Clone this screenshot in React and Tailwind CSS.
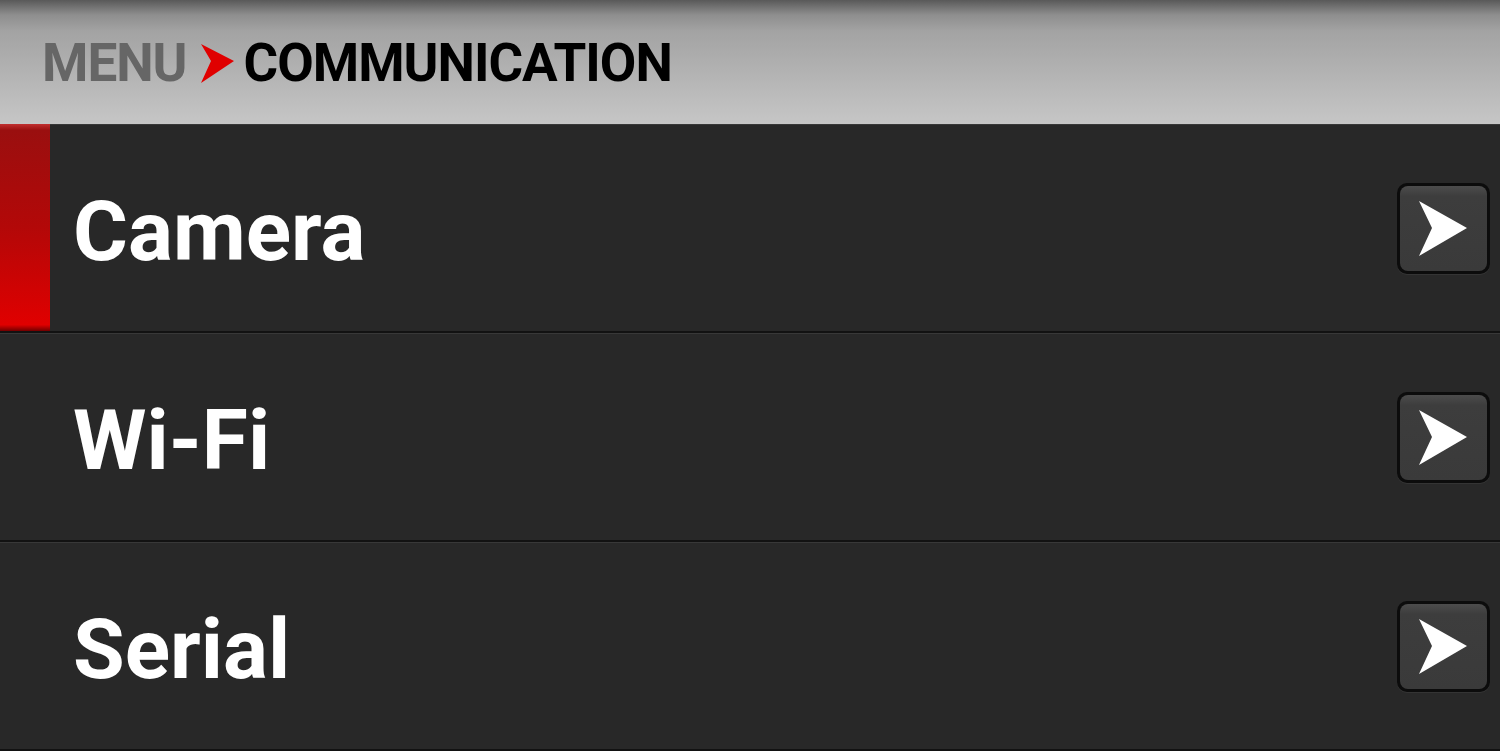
import React from "react";

function Chevron() {
  return (
    <svg width="93" height="91" viewBox="0 0 93 91" className="block">
      <path d="M22 18 L70 45 L22 73 L35 45 Z" fill="#ffffff" />
    </svg>
  );
}

function ArrowButton() {
  return (
    <div className="w-[93px] h-[91px] rounded-[10px] bg-[#0c0c0c] p-[3px] shadow-[0_1px_0_rgba(255,255,255,0.06)]">
      <div className="relative w-full h-full rounded-[8px] bg-[linear-gradient(#4c4c4c,#3d3d3d_12%,#3a3a3a)]">
        <div className="absolute -left-[3px] -top-[3px]">
          <Chevron />
        </div>
      </div>
    </div>
  );
}

function Row({ label, active }) {
  return (
    <div className="relative h-[209px] flex items-center bg-[#282828] border-t border-[#383838] border-b-2 border-b-[#121212]">
      {active && (
        <div className="absolute left-0 top-[-1px] bottom-0 w-[50px] bg-[linear-gradient(#c03030,#9a0f0f_3%,#b30808_50%,#e00000_97%,#700000)]" />
      )}
      <div className="pl-[73px] pt-[8px] flex-1 text-white font-bold text-[84px] leading-none tracking-normal [font-family:Roboto,'Liberation_Sans',sans-serif]">
        {label}
      </div>
      <div className="pr-[10px]">
        <ArrowButton />
      </div>
    </div>
  );
}

export default function App() {
  return (
    <div className="w-[1500px] h-[751px] overflow-hidden flex flex-col bg-[#282828]">
      <div className="h-[124px] shrink-0 flex items-center pl-[42px] pt-[3px] bg-[linear-gradient(#595959,#8e8e8e_12%,#a3a3a3_25%,#c6c6c6)] [font-family:Roboto,'Liberation_Sans',sans-serif] font-bold text-[53px] leading-none tracking-[-1px]">
        <span className="text-[#666666]">MENU</span>
        <svg width="40" height="44" viewBox="0 0 40 44" className="ml-[10px] mr-[7px]">
          <path d="M4 2 L37 19 L4 41 L14 19 Z" fill="#e00000" />
        </svg>
        <span className="text-black">COMMUNICATION</span>
      </div>
      <Row label="Camera" active />
      <Row label="Wi-Fi" />
      <Row label="Serial" />
    </div>
  );
}
